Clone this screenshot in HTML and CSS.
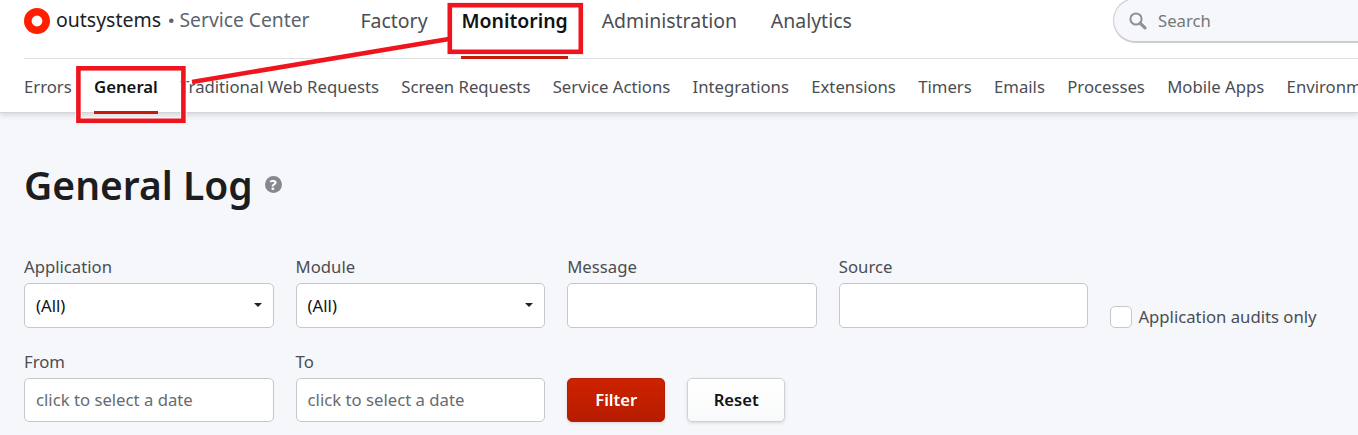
FILE: index.html
```html
<!DOCTYPE html>
<html lang="en">
<head>
<meta charset="utf-8">
<title>General Log</title>
<link rel="stylesheet" href="styles.css">
</head>
<body>
<header class="header">
  <div class="topbar">
    <div class="brand">
      <svg class="brand-mark" viewBox="0 0 26 26"><circle cx="13" cy="13" r="9.2" fill="none" stroke="#ff1f00" stroke-width="7.6"/></svg>
      <svg class="brand-text" viewBox="0 0 260 34"><text class="word" x="0" y="22.5" textLength="105" lengthAdjust="spacingAndGlyphs">outsystems</text><circle cx="115.3" cy="16.8" r="2.3" fill="#5b6470"/><text class="product" x="123.5" y="22.5" textLength="130" lengthAdjust="spacingAndGlyphs">Service Center</text></svg>
    </div>
    <nav class="mainnav">
      <a class="main-link">Factory</a>
      <a class="main-link active">Monitoring</a>
      <a class="main-link">Administration</a>
      <a class="main-link">Analytics</a>
    </nav>
    <div class="search">
      <svg class="search-icon" viewBox="0 0 18 18"><circle cx="7" cy="7" r="5.6" fill="none" stroke="#8d9095" stroke-width="2"/><path d="M11.3 11.3L16 15.8" stroke="#8d9095" stroke-width="3.2" stroke-linecap="round"/></svg>
      <span>Search</span>
    </div>
  </div>
  <nav class="subnav">
    <a class="sub-link">Errors</a>
    <a class="sub-link active">General</a>
    <a class="sub-link">Traditional Web Requests</a>
    <a class="sub-link">Screen Requests</a>
    <a class="sub-link">Service Actions</a>
    <a class="sub-link">Integrations</a>
    <a class="sub-link">Extensions</a>
    <a class="sub-link">Timers</a>
    <a class="sub-link">Emails</a>
    <a class="sub-link">Processes</a>
    <a class="sub-link">Mobile Apps</a>
    <a class="sub-link">Environment</a>
  </nav>
</header>
<main class="content">
  <div class="title-row">
    <h1>General Log</h1>
    <span class="help">?</span>
  </div>
  <div class="filters">
    <div class="field"><label>Application</label><div class="control select">(All)<i class="caret"></i></div></div>
    <div class="field"><label>Module</label><div class="control select">(All)<i class="caret"></i></div></div>
    <div class="field"><label>Message</label><div class="control"></div></div>
    <div class="field"><label>Source</label><div class="control"></div></div>
    <div class="check"><span class="checkbox"></span><span>Application audits only</span></div>
    <div class="field"><label>From</label><div class="control date">click to select a date</div></div>
    <div class="field"><label>To</label><div class="control date">click to select a date</div></div>
    <div class="actions"><button class="btn primary">Filter</button><button class="btn">Reset</button></div>
  </div>
</main>
<svg class="annotations" viewBox="0 0 1358 435">
  <g fill="none" stroke="#fff" stroke-opacity=".75" stroke-width="6.5"><rect x="78.4" y="68.3" width="105" height="52.5"/><rect x="449.8" y="5.2" width="131" height="46.6"/></g>
  <g fill="none" stroke="#ee151f" stroke-width="4.6"><rect x="78.4" y="68.3" width="105" height="52.5"/><rect x="449.8" y="5.2" width="131" height="46.6"/><path d="M192 82L449 39"/></g>
</svg>
</body>
</html>
```
FILE: styles.css
```css
* { box-sizing: border-box; }
body {
  margin: 0;
  width: 1358px;
  height: 435px;
  overflow: hidden;
  background: #f6f7fa;
  color: #4a4d52;
  font: 16.72px/22px "Noto Sans", sans-serif;
}
.header {
  height: 113px;
  padding-left: 24px;
  background: #fff;
  border-bottom: 1px solid #d3d5d7;
  box-shadow: 0 2px 6px rgba(0, 0, 0, .14);
}
.topbar { display: flex; height: 59px; border-bottom: 1px solid #dee0e2; }
.brand { display: flex; width: 336.5px; flex: none; padding-top: 4px; }
.brand-mark { width: 26px; height: 26px; margin-top: 4px; flex: none; }
.brand-text { width: 260px; height: 34px; margin-left: 6px; }
.brand-text text { font-family: "Noto Sans", sans-serif; font-size: 19.5px; }
.word { fill: #202124; }
.product { fill: #5b6470; }
.mainnav { display: flex; flex: none; gap: 33.9px; font-size: 19.45px; line-height: 41px; white-space: nowrap; }
.main-link { flex: none; height: 59px; }
.main-link.active, .sub-link.active { color: #101213; font-weight: 600; }
.main-link.active { border-bottom: 3px solid #c51b08; }
.search {
  display: flex;
  align-items: center;
  flex: none;
  width: 245px;
  height: 45px;
  margin: -2px 0 0 auto;
  padding: 1px 0 0 15px;
  gap: 11px;
  border: 1px solid #cacccf;
  border-right: 0;
  border-bottom-width: 2px;
  border-radius: 23px 0 0 23px;
  background: #f6f7fa;
  color: #74777b;
}
.search-icon { width: 18px; height: 18px; }
.subnav { display: flex; gap: 22.3px; width: 1334px; height: 55px; overflow: hidden; white-space: nowrap; line-height: 55px; }
.sub-link { flex: none; height: 55px; }
.sub-link.active { border-bottom: 3px solid #c51b08; }
.content { padding: 47px 24px 0; }
.title-row { display: flex; gap: 12px; height: 95px; }
h1 { margin: 0; font-size: 39px; line-height: 50px; font-weight: 600; color: #1b1d20; white-space: nowrap; }
.help { width: 17px; height: 17px; margin-top: 16px; border-radius: 50%; background: #86888d; color: #fff; font-size: 14.5px; font-weight: 700; line-height: 17px; text-align: center; }
.filters { display: grid; grid-template-columns: repeat(4, 249.6px) 224px; column-gap: 22px; row-gap: 22px; }
.field label { display: block; height: 28px; line-height: 23px; }
.control { display: flex; align-items: center; justify-content: space-between; height: 44.5px; padding: 0 11px; border: 1px solid #c5c7ca; border-radius: 5px; background: #fff; }
.select { padding-top: 1px; color: #101213; }
.caret { margin-bottom: 2px; border: 4px solid transparent; border-top-color: #202326; border-bottom: 0; }
.date { color: #686b6f; }
.check { display: flex; align-items: flex-end; gap: 6px; white-space: nowrap; }
.checkbox { width: 22px; height: 22px; border: 1px solid #c5c7ca; border-radius: 5px; background: #fff; }
.actions { display: flex; align-items: flex-end; gap: 22px; }
.btn { flex: none; width: 98px; height: 44.5px; padding: 0; border: 1px solid #d0d2d5; border-radius: 5px; background: linear-gradient(#fff, #f8f9fa); box-shadow: 0 1px 3px rgba(0, 0, 0, .14); color: #101213; font: 600 16.6px "Noto Sans", sans-serif; }
.btn.primary { border-color: #b32008; background: linear-gradient(#cd2200, #b71c00); color: #fff; }
.annotations { position: absolute; left: 0; top: 0; width: 1358px; height: 435px; pointer-events: none; }
```
